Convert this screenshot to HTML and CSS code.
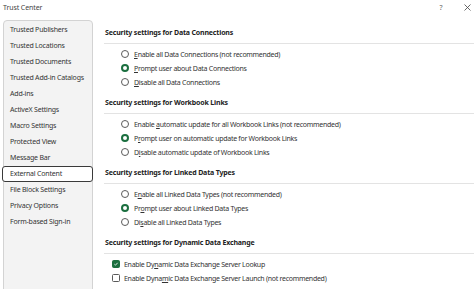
FILE: index.html
```html
<!DOCTYPE html>
<html>
<head>
<meta charset="utf-8">
<link rel="stylesheet" href="styles.css">
</head>
<body>
<div class="window">
  <div class="titlebar">
    <span class="title">Trust Center</span>
    <span class="help">?</span>
    <span class="close"><svg width="7" height="7" viewBox="0 0 7 7"><path d="M0.5 0.5 L6.5 6.5 M6.5 0.5 L0.5 6.5" stroke="#444" stroke-width="0.8" fill="none"/></svg></span>
  </div>
  <div class="main">
    <nav class="nav">
      <div class="nav-item">Trusted Publishers</div>
      <div class="nav-item">Trusted Locations</div>
      <div class="nav-item">Trusted Documents</div>
      <div class="nav-item">Trusted Add-in Catalogs</div>
      <div class="nav-item">Add-ins</div>
      <div class="nav-item">ActiveX Settings</div>
      <div class="nav-item">Macro Settings</div>
      <div class="nav-item">Protected View</div>
      <div class="nav-item">Message Bar</div>
      <div class="nav-item selected">External Content</div>
      <div class="nav-item">File Block Settings</div>
      <div class="nav-item">Privacy Options</div>
      <div class="nav-item">Form-based Sign-in</div>
    </nav>
    <div class="content">
      <section class="section">
        <div class="heading">Security settings for Data Connections</div>
        <div class="options">
          <div class="option"><span class="radio"></span><span><u>E</u>nable all Data Connections (not recommended)</span></div>
          <div class="option"><span class="radio on"></span><span><u>P</u>rompt user about Data Connections</span></div>
          <div class="option"><span class="radio"></span><span><u>D</u>isable all Data Connections</span></div>
        </div>
      </section>
      <section class="section">
        <div class="heading">Security settings for Workbook Links</div>
        <div class="options">
          <div class="option"><span class="radio"></span><span>Enable <u>a</u>utomatic update for all Workbook Links (not recommended)</span></div>
          <div class="option"><span class="radio on"></span><span>P<u>r</u>ompt user on automatic update for Workbook Links</span></div>
          <div class="option"><span class="radio"></span><span>D<u>i</u>sable automatic update of Workbook Links</span></div>
        </div>
      </section>
      <section class="section">
        <div class="heading">Security settings for Linked Data Types</div>
        <div class="options">
          <div class="option"><span class="radio"></span><span>E<u>n</u>able all Linked Data Types (not recommended)</span></div>
          <div class="option"><span class="radio on"></span><span>Pr<u>o</u>mpt user about Linked Data Types</span></div>
          <div class="option"><span class="radio"></span><span>Di<u>s</u>able all Linked Data Types</span></div>
        </div>
      </section>
      <section class="section">
        <div class="heading">Security settings for Dynamic Data Exchange</div>
        <div class="options checks">
          <div class="option"><span class="check on"><svg width="8" height="8" viewBox="0 0 8 8"><path d="M1.8 4.2 L3.3 5.6 L6.2 2.4" stroke="#fff" stroke-width="1.1" fill="none"/></svg></span><span>Enable Dy<u>n</u>amic Data Exchange Server Lookup</span></div>
          <div class="option"><span class="check"></span><span>Enable Dyna<u>m</u>ic Data Exchange Server Launch (not recommended)</span></div>
        </div>
      </section>
    </div>
  </div>
</div>
</body>
</html>
```
FILE: styles.css
```css
* { box-sizing: border-box; }
html, body { margin: 0; padding: 0; }
body {
  width: 474px;
  height: 289px;
  overflow: hidden;
  background: #fff;
  font-family: "Noto Sans", "Open Sans", sans-serif;
  font-size: 7px;
  color: #2b2b2b;
}
.window { width: 474px; height: 289px; display: flex; flex-direction: column; }
.titlebar {
  height: 20px;
  display: flex;
  align-items: flex-start;
  padding: 1px 0 0 3px;
  line-height: 13px;
  color: #444;
  flex: none;
}
.title { flex: 1; font-size: 7px; letter-spacing: -0.1px; }
.help { width: 6px; margin-right: 20px; color: #666; font-size: 7px; text-align: center; }
.close { width: 7px; display: flex; align-items: center; height: 13px; margin-right: 3px; }
.main { flex: 1; display: flex; min-height: 0; }
.nav {
  flex: none;
  width: 90px;
  margin-left: 3px;
  margin-bottom: -6px;
  border: 1px solid #d3d3d3;
  border-radius: 4px 4px 0 0;
  background: #f3f3f3;
  padding-top: 1px;
}
.nav-item {
  height: 16px;
  line-height: 16px;
  padding-left: 6px;
  color: #333;
  white-space: nowrap;
  letter-spacing: -0.2px;
}
.nav-item.selected {
  margin: 0 -1px 0 -2px;
  border: 1px solid #3a3a3a;
  border-radius: 3px;
  background: #fff;
  line-height: 14px;
  padding-left: 7px;
}
.content { flex: 1; margin-left: 11px; padding-top: 6px; min-width: 0; }
.section { margin-bottom: 7px; }
.heading {
  font-weight: 700;
  color: #222;
  line-height: 14px;
  padding: 0 0 3px 1px;
  border-bottom: 1px solid #e3e3e3;
  white-space: nowrap;
  letter-spacing: -0.16px;
}
.options { padding: 3px 0 0 17px; }
.options.checks { padding-left: 8px; }
.option {
  height: 14px;
  display: flex;
  align-items: center;
  gap: 5px;
  white-space: nowrap;
  color: #333;
  letter-spacing: -0.28px;
}
.checks .option { gap: 4px; }
.option u { text-decoration-thickness: 0.6px; text-underline-offset: 1px; }
.radio {
  flex: none;
  width: 8px;
  height: 8px;
  border-radius: 50%;
  border: 1px solid #5a5a5a;
  background: #fff;
}
.radio.on { border: 2.5px solid #1b6f3f; }
.check {
  flex: none;
  width: 8px;
  height: 8px;
  border: 1px solid #5a5a5a;
  border-radius: 1.5px;
  background: #fff;
  display: flex;
  align-items: center;
  justify-content: center;
}
.check.on { background: #1b6f3f; border-color: #1b6f3f; }
.check svg { display: block; }
```
